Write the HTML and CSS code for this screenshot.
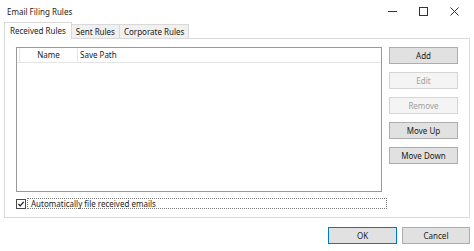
FILE: index.html
```html
<!DOCTYPE html>
<html>
<head>
<meta charset="utf-8">
<link rel="stylesheet" href="styles.css">
</head>
<body>
<div class="window">
  <div class="titlebar">
    <span class="title">Email Filing Rules</span>
    <div class="controls">
      <svg class="ctl" width="31" height="22" viewBox="0 0 31 22"><line x1="10" y1="11.5" x2="19" y2="11.5" stroke="#333" stroke-width="1"/></svg>
      <svg class="ctl" width="31" height="22" viewBox="0 0 31 22"><rect x="10.5" y="7.5" width="8" height="8" fill="none" stroke="#333" stroke-width="1"/></svg>
      <svg class="ctl" width="31" height="22" viewBox="0 0 31 22"><path d="M10.5 7.5 L18.5 15.5 M18.5 7.5 L10.5 15.5" stroke="#333" stroke-width="1"/></svg>
    </div>
  </div>
  <div class="body">
    <div class="tabs">
      <div class="tab selected">Received Rules</div>
      <div class="tab">Sent Rules</div>
      <div class="tab">Corporate Rules</div>
    </div>
    <div class="panel">
      <div class="content">
        <div class="list">
          <div class="header">
            <div class="col c0"></div>
            <div class="col c1">Name</div>
            <div class="col c2">Save Path</div>
          </div>
        </div>
        <div class="buttons">
          <button class="btn">Add</button>
          <button class="btn disabled">Edit</button>
          <button class="btn disabled">Remove</button>
          <button class="btn">Move Up</button>
          <button class="btn">Move Down</button>
        </div>
      </div>
      <div class="check-row">
        <span class="checkbox"><svg width="10" height="10" viewBox="0 0 10 10"><path d="M1.8 5 L4 7.3 L8.4 2.4" fill="none" stroke="#1a1a1a" stroke-width="1.6"/></svg></span>
        <span class="check-label">Automatically file received emails</span>
      </div>
    </div>
    <div class="footer">
      <button class="btn default">OK</button>
      <button class="btn cancel">Cancel</button>
    </div>
  </div>
</div>
</body>
</html>
```
FILE: styles.css
```css
* { box-sizing: border-box; }
html, body { margin: 0; padding: 0; background: #fff; }
body {
  width: 474px;
  height: 251px;
  overflow: hidden;
  font-family: "Noto Sans", "Open Sans", sans-serif;
  font-size: 8px;
  color: #1a1a1a;
}
.titlebar {
  height: 22px;
  display: flex;
  align-items: center;
  justify-content: space-between;
}
.title { padding-left: 7px; color: #222; }
.controls { display: flex; padding-right: 3px; }
.ctl { display: block; }
.body { padding: 0 4px; }
.tabs {
  display: flex;
  align-items: flex-end;
  height: 16px;
}
.tab {
  height: 14px;
  padding: 0 4px;
  line-height: 14px;
  background: #f0f0f0;
  border: 1px solid #d9d9d9;
  border-bottom: none;
  margin-left: -1px;
  color: #1a1a1a;
}
.tab.selected {
  height: 17px;
  margin-bottom: -1px;
  margin-left: 0;
  background: #fff;
  position: relative;
  z-index: 1;
  line-height: 15px;
  padding: 0 5px;
}
.panel {
  width: 466px;
  height: 180px;
  border: 1px solid #d9d9d9;
  padding: 8px 0 0 11px;
}
.content { display: flex; }
.list {
  width: 366px;
  height: 145px;
  border: 1px solid #9a9a9a;
  background: #fff;
}
.header {
  display: flex;
  height: 15px;
  border-bottom: 1px solid #e5e5e5;
}
.col {
  line-height: 14px;
  border-right: 1px solid #e5e5e5;
}
.c0 { width: 3px; }
.c1 { width: 58px; text-align: center; }
.c2 { width: 55px; padding-left: 2px; border-right: none; }
.buttons {
  display: flex;
  flex-direction: column;
  gap: 8px;
  margin-left: 7px;
}
.btn {
  font-family: inherit;
  font-size: 8px;
  width: 69px;
  height: 17px;
  padding: 0;
  background: #e1e1e1;
  border: 1px solid #adadad;
  color: #1a1a1a;
  line-height: 15px;
}
.btn.disabled {
  background: #f4f4f4;
  border-color: #d5d5d5;
  color: #a0a0a0;
}
.check-row {
  display: flex;
  align-items: center;
  margin-top: 6px;
  height: 11px;
}
.checkbox {
  width: 10px;
  height: 10px;
  border: 1px solid #4a4a4a;
  display: flex;
  align-items: center;
  justify-content: center;
  background: #fff;
}
.checkbox svg { display: block; }
.check-label {
  margin-left: 1px;
  width: 360px;
  height: 11px;
  line-height: 10px;
  padding-left: 3px;
  border: 1px dotted #777;
}
.footer {
  display: flex;
  justify-content: flex-end;
  gap: 5px;
  margin-top: 9px;
}
.btn.default { border-color: #0078d7; width: 69px; }
.btn.cancel { width: 68px; }
```
